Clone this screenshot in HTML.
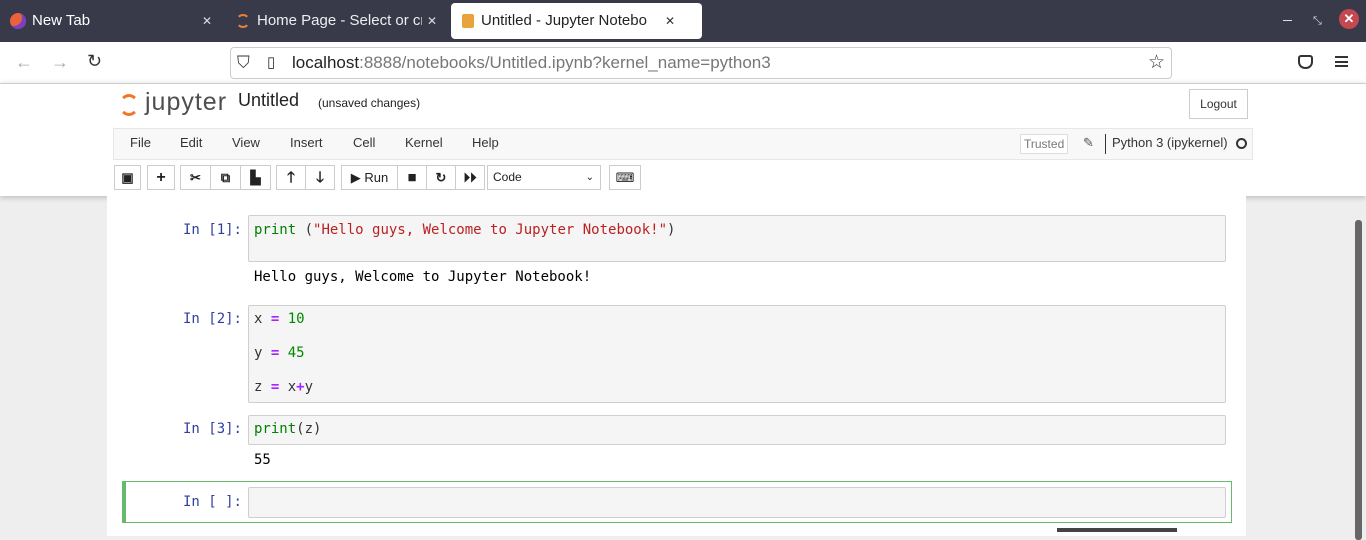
<!DOCTYPE html>
<html><head><meta charset="utf-8"><style>
*{box-sizing:border-box;margin:0;padding:0}
body{width:1366px;height:532px;overflow:hidden;background:#eee;font-family:"Liberation Sans",sans-serif;position:relative}
.abs{position:absolute}
.tabbar{left:0;top:0;width:1366px;height:42px;background:#383a4a}
.tab{top:0;height:42px;color:#fff;font-size:15px;line-height:42px}
.x{font-size:12px;font-family:"DejaVu Sans",sans-serif}
.nav{left:0;top:42px;width:1366px;height:42px;background:#fff;border-bottom:1px solid #ddd}
.url{left:230px;top:47px;width:942px;height:32px;border:1px solid #ccc;border-radius:4px;font-size:17px;line-height:30px;color:#777}
.hdr{left:0;top:84px;width:1366px;height:112px;background:#fff;box-shadow:0 1px 6px rgba(0,0,0,.25)}
.menu{left:113px;top:128px;width:1140px;height:32px;background:#f8f8f8;border:1px solid #e7e7e7;font-size:13px;color:#333}
.menu span{position:absolute;top:6px}
.btn{top:165px;height:25px;border:1px solid #ccc;background:#fff;font-size:13px;color:#222;text-align:center;line-height:23px;font-weight:bold}
.nb{left:107px;top:196px;width:1139px;height:340px;background:#fff}
.prompt{font-family:"DejaVu Sans Mono","Liberation Mono",monospace;font-size:14px;color:#303f9f;text-align:right;width:100px;left:142px}
.box{left:248px;width:978px;background:#f5f5f5;border:1px solid #cfcfcf;border-radius:2px}
.code{font-family:"DejaVu Sans Mono","Liberation Mono",monospace;font-size:14px;color:#333;left:254px;white-space:pre}
.g{color:#008000}.r{color:#ba2121}.p{color:#aa22ff;font-weight:bold}.n{color:#080}
</style></head><body>
<div class="abs tabbar"></div>
<div class="abs" style="left:10px;top:13px;width:16px;height:16px;border-radius:50%;background:#e8623c;box-shadow:inset -4px -3px 0 #7a3fc4"></div>
<div class="abs tab" style="left:32px">New Tab</div>
<div class="abs tab x" style="left:202px;color:#ddd">✕</div>
<div class="abs" style="left:236px;top:14px;width:14px;height:14px;border-radius:50%;border:2px solid #e87f3a;border-left-color:transparent;border-right-color:transparent"></div>
<div class="abs tab" style="left:257px;width:165px;overflow:hidden;white-space:nowrap;color:#eee">Home Page - Select or cr</div>
<div class="abs tab x" style="left:427px;color:#ddd">✕</div>
<div class="abs" style="left:451px;top:3px;width:251px;height:36px;background:#fff;border-radius:4px"></div>
<div class="abs" style="left:462px;top:14px;width:12px;height:14px;background:#e8a33c;border-radius:2px"></div>
<div class="abs tab" style="left:481px;width:180px;overflow:hidden;white-space:nowrap;color:#222">Untitled - Jupyter Notebo</div>
<div class="abs tab x" style="left:665px;color:#333">✕</div>
<div class="abs tab" style="left:688px;font-size:22px;color:#fff">+</div>
<div class="abs" style="left:1283px;top:20px;width:9px;height:1px;background:#ddd"></div>
<div class="abs tab" style="left:1313px;font-size:11px;color:#ddd">⤡</div>
<div class="abs" style="left:1339px;top:9px;width:20px;height:20px;border-radius:50%;background:#c4484f;color:#fff;font-size:13px;text-align:center;line-height:20px;font-weight:bold">✕</div>
<div class="abs nav"></div>
<div class="abs" style="left:15px;top:52px;font-size:18px;color:#aaa">←</div>
<div class="abs" style="left:51px;top:52px;font-size:18px;color:#aaa">→</div>
<div class="abs" style="left:87px;top:51px;font-size:18px;color:#333">↻</div>
<div class="abs url"><span style="position:absolute;left:6px;top:0;color:#333">⛉</span><span style="position:absolute;left:36px;top:0;color:#333;font-size:15px">▯</span><span style="position:absolute;left:61px"><span style="color:#222">localhost</span>:8888/notebooks/Untitled.ipynb?kernel_name=python3</span><span style="position:absolute;right:6px;top:0;color:#333;font-size:19px">☆</span></div>
<div class="abs" style="left:1298px;top:55px;width:15px;height:14px;border:2px solid #333;border-radius:3px 3px 7px 7px"></div>
<div class="abs" style="left:1335px;top:56px;width:13px;height:11px;border-top:2px solid #333;border-bottom:2px solid #333"></div>
<div class="abs" style="left:1335px;top:61px;width:13px;height:2px;background:#333"></div>
<div class="abs hdr"></div>
<div class="abs" style="left:119px;top:94px;width:20px;height:22px;border-radius:50%;border:3px solid #f37626;border-left-color:transparent;border-right-color:transparent"></div>
<div class="abs" style="left:145px;top:88px;font-size:25px;color:#4e4e4e;letter-spacing:1px">jupyter</div>
<div class="abs" style="left:238px;top:90px;font-size:18px;color:#222">Untitled</div>
<div class="abs" style="left:318px;top:96px;font-size:12px;color:#222">(unsaved changes)</div>
<div class="abs" style="left:1189px;top:89px;width:59px;height:30px;border:1px solid #ccc;font-size:12px;line-height:28px;text-align:center;color:#333">Logout</div>
<div class="abs menu"><span style="left:16px">File</span><span style="left:66px">Edit</span><span style="left:118px">View</span><span style="left:176px">Insert</span><span style="left:239px">Cell</span><span style="left:291px">Kernel</span><span style="left:358px">Help</span>
<span style="left:906px;top:5px;border:1px solid #ddd;padding:2px 3px;font-size:12px;color:#777;background:#fff">Trusted</span><span style="left:969px;top:6px;color:#555">✎</span><span style="left:991px;top:5px;width:1px;height:20px;background:#333"></span><span style="left:998px">Python 3 (ipykernel)</span><span style="left:1122px;top:9px;width:11px;height:11px;border:2px solid #333;border-radius:50%"></span></div>
<div class="abs btn" style="left:114px;width:27px">▣</div>
<div class="abs btn" style="left:147px;width:28px;font-size:16px">+</div>
<div class="abs btn" style="left:180px;width:31px">✂</div>
<div class="abs btn" style="left:210px;width:31px">⧉</div>
<div class="abs btn" style="left:240px;width:31px">▙</div>
<div class="abs btn" style="left:276px;width:30px;font-size:15px">🡑</div>
<div class="abs btn" style="left:305px;width:30px;font-size:15px">🡓</div>
<div class="abs btn" style="left:341px;width:57px;font-weight:normal">▶ Run</div>
<div class="abs btn" style="left:397px;width:30px;font-size:15px">■</div>
<div class="abs btn" style="left:426px;width:30px">↻</div>
<div class="abs btn" style="left:455px;width:30px">⏵⏵</div>
<div class="abs btn" style="left:487px;width:114px;text-align:left;padding-left:5px;font-size:12px;font-weight:normal">Code<span style="position:absolute;right:6px;font-size:10px">⌄</span></div>
<div class="abs btn" style="left:609px;width:32px;font-weight:normal">⌨</div>
<div class="abs nb"></div>
<div class="abs" style="left:1355px;top:220px;width:7px;height:320px;background:#666;border-radius:3px"></div>
<div class="abs prompt" style="top:222px">In [1]:</div>
<div class="abs box" style="top:215px;height:47px"></div>
<div class="abs code" style="top:222px"><span class="g">print</span> (<span class="r">"Hello guys, Welcome to Jupyter Notebook!"</span>)</div>
<div class="abs code" style="top:269px;color:#000">Hello guys, Welcome to Jupyter Notebook!</div>
<div class="abs prompt" style="top:311px">In [2]:</div>
<div class="abs box" style="top:305px;height:98px"></div>
<div class="abs code" style="top:311px">x <span class="p">=</span> <span class="n">10</span></div>
<div class="abs code" style="top:345px">y <span class="p">=</span> <span class="n">45</span></div>
<div class="abs code" style="top:379px">z <span class="p">=</span> x<span class="p">+</span>y</div>
<div class="abs prompt" style="top:421px">In [3]:</div>
<div class="abs box" style="top:415px;height:30px"></div>
<div class="abs code" style="top:421px"><span class="g">print</span>(z)</div>
<div class="abs code" style="top:452px;color:#000">55</div>
<div class="abs" style="left:122px;top:481px;width:1110px;height:42px;border:1px solid #66bb6a;border-left:4px solid #66bb6a"></div>
<div class="abs prompt" style="top:494px">In [ ]:</div>
<div class="abs box" style="top:487px;height:31px"></div>
<div class="abs" style="left:1057px;top:528px;width:120px;height:4px;background:#444"></div>
</body></html>
